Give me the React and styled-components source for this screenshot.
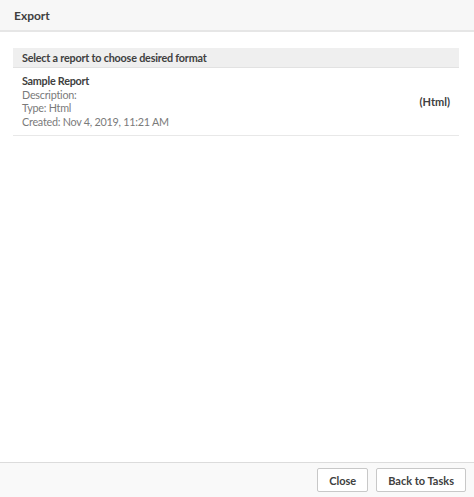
import React from 'react';
import styled, { createGlobalStyle } from 'styled-components';

const GlobalStyle = createGlobalStyle`
  html, body {
    margin: 0;
    padding: 0;
    background: #fff;
  }
  body {
    font-family: Lato, "Open Sans", sans-serif;
    color: #404040;
  }
`;

const Dialog = styled.div`
  width: 474px;
  height: 497px;
  display: flex;
  flex-direction: column;
  background: #fff;
`;

const Header = styled.div`
  height: 32px;
  box-sizing: border-box;
  display: flex;
  align-items: center;
  padding: 0 14px;
  background: #f7f7f7;
  border-bottom: 2px solid #e6e6e6;
  font-size: 12px;
  font-weight: 700;
  color: #404040;
`;

const Body = styled.div`
  flex: 1;
  padding: 16px 15px 0 13px;
`;

const ListHeader = styled.div`
  height: 19px;
  display: flex;
  align-items: center;
  padding: 0 9px;
  background: #efefef;
  border-bottom: 1px solid #e2e2e2;
  font-size: 10.8px;
  letter-spacing: -0.2px;
  font-weight: 700;
  color: #404040;
`;

const ReportRow = styled.div`
  display: flex;
  align-items: center;
  justify-content: space-between;
  padding: 6px 9px 7px;
  border-bottom: 1px solid #e8e8e8;
  cursor: pointer;
`;

const ReportInfo = styled.div`
  display: flex;
  flex-direction: column;
`;

const Line = styled.div`
  font-size: 10.8px;
  line-height: 13.6px;
  letter-spacing: -0.25px;
  color: ${p => (p.$title ? '#404040' : '#7a7a7a')};
  font-weight: ${p => (p.$title ? 700 : 400)};
`;

const Format = styled.div`
  font-size: 11px;
  font-weight: 700;
  color: #404040;
`;

const Footer = styled.div`
  height: 34px;
  display: flex;
  justify-content: flex-end;
  align-items: center;
  gap: 8px;
  padding: 0 8px 0 0;
  background: #f9f9f9;
  border-top: 1px solid #dcdcdc;
`;

const Button = styled.button`
  height: 24px;
  padding: 0 ${p => p.$pad || 12}px;
  background: #fff;
  border: 1px solid #c8c8c8;
  border-radius: 2px;
  font-family: inherit;
  font-size: 11px;
  font-weight: 700;
  color: #404040;
  cursor: pointer;
`;

const reports = [
  {
    name: 'Sample Report',
    description: '',
    type: 'Html',
    created: 'Nov 4, 2019, 11:21 AM',
  },
];

export default function App() {
  return (
    <>
      <GlobalStyle />
      <Dialog>
        <Header>Export</Header>
        <Body>
          <ListHeader>Select a report to choose desired format</ListHeader>
          {reports.map(r => (
            <ReportRow key={r.name}>
              <ReportInfo>
                <Line $title>{r.name}</Line>
                <Line>Description: {r.description}</Line>
                <Line>Type: {r.type}</Line>
                <Line>Created: {r.created}</Line>
              </ReportInfo>
              <Format>({r.type})</Format>
            </ReportRow>
          ))}
        </Body>
        <Footer>
          <Button $pad={11}>Close</Button>
          <Button $pad={11}>Back to Tasks</Button>
        </Footer>
      </Dialog>
    </>
  );
}
